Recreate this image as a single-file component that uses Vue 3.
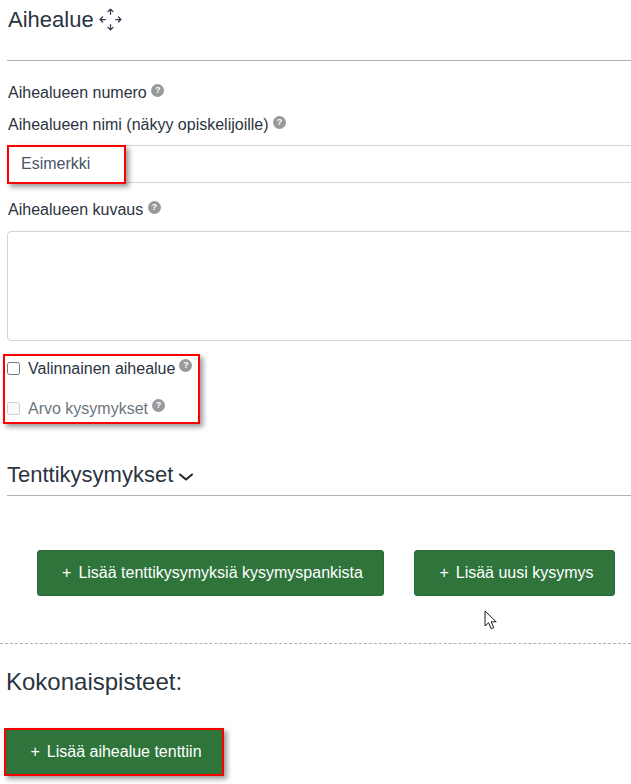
<script setup>
const help = '?'
</script>

<template>
  <div class="page">
    <header class="section-head first">
      <h2 class="title">Aihealue</h2>
      <svg class="move" viewBox="0 0 24 24" width="25" height="25" fill="none" stroke="#2f3b4c" stroke-width="1.2" stroke-linecap="round" stroke-linejoin="round">
        <path d="M12 2v5M9.6 4.4 12 2l2.4 2.4M12 17v5M9.6 19.6 12 22l2.4-2.4M2 12h5M4.4 9.6 2 12l2.4 2.4M17 12h5M19.6 9.6 22 12l-2.4 2.4" />
      </svg>
    </header>

    <div class="field-label first-label">Aihealueen numero <span class="help">{{ help }}</span></div>
    <div class="field-label second-label">Aihealueen nimi (näkyy opiskelijoille) <span class="help">{{ help }}</span></div>
    <div class="input">
      <span>Esimerkki</span>
      <div class="mark mark-input"></div>
    </div>

    <div class="field-label third-label">Aihealueen kuvaus <span class="help">{{ help }}</span></div>
    <div class="textarea"></div>

    <div class="checks">
      <div class="mark mark-checks"></div>
      <label class="check">
        <input type="checkbox" />
        <span>Valinnainen aihealue</span>
        <span class="help">{{ help }}</span>
      </label>
      <label class="check disabled">
        <input type="checkbox" disabled />
        <span>Arvo kysymykset</span>
        <span class="help">{{ help }}</span>
      </label>
    </div>

    <header class="section-head second">
      <h2 class="title">Tenttikysymykset</h2>
      <svg class="chevron" viewBox="0 0 16 10" width="16" height="10" fill="none" stroke="#212529" stroke-width="2" stroke-linecap="round" stroke-linejoin="round">
        <path d="M2 2.5l6 5 6-5" />
      </svg>
    </header>

    <div class="actions">
      <button class="btn wide" type="button"><span class="plus">+</span>Lisää tenttikysymyksiä kysymyspankista</button>
      <button class="btn narrow" type="button"><span class="plus">+</span>Lisää uusi kysymys</button>
      <svg class="cursor" viewBox="0 0 14 20" width="14" height="20">
        <path d="M1 1v15l3.6-3.3 2.6 6 2.6-1.1-2.6-5.8h5z" fill="#fff" stroke="#1a1a1a" stroke-width="1" stroke-linejoin="round" />
      </svg>
    </div>

    <div class="divider"></div>

    <h2 class="total">Kokonaispisteet:</h2>

    <button class="btn add" type="button"><span class="plus">+</span>Lisää aihealue tenttiin</button>
  </div>
</template>

<style scoped>
.page {
  position: relative;
  width: 631px;
  height: 784px;
  overflow: hidden;
  background: #fff;
  color: #2b3440;
  font-family: "Liberation Sans", Arial, sans-serif;
  font-size: 16px;
}
.section-head {
  display: flex;
  align-items: flex-start;
  margin-left: 7px;
  border-bottom: 1px solid #b0b0b0;
}
.section-head.first {
  box-sizing: border-box;
  height: 61px;
  padding-top: 7px;
}
.section-head.first .title {
  margin-left: 1px;
}
.section-head.second {
  margin-top: 33px;
  height: 39px;
  box-sizing: border-box;
  padding-top: 5px;
}
.title {
  margin: 0;
  font-size: 22px;
  font-weight: 400;
  line-height: 26px;
  color: #2b3440;
}
.move {
  margin-left: 4px;
  margin-top: 0;
}
.chevron {
  margin: 10px 0 0 5px;
}
.field-label {
  margin-left: 8px;
  line-height: 20px;
  color: #2b3440;
}
.first-label { margin-top: 22px; }
.second-label { margin-top: 12px; }
.third-label { margin-top: 17px; }
.help {
  display: inline-block;
  width: 13px;
  height: 13px;
  margin-left: 0;
  border-radius: 50%;
  background: #999;
  color: #fff;
  font-size: 9px;
  font-weight: 700;
  line-height: 13px;
  text-align: center;
  vertical-align: 5px;
}
.input {
  position: relative;
  box-sizing: border-box;
  height: 38px;
  margin-top: 10px;
  margin-left: 7px;
  padding: 0 14px;
  border-top: 1px solid #ced4da;
  border-bottom: 1px solid #ced4da;
  line-height: 36px;
  color: #495566;
}
.textarea {
  box-sizing: border-box;
  width: 640px;
  height: 110px;
  margin-top: 11px;
  margin-left: 7px;
  border: 1px solid #ced4da;
  border-radius: 4px;
}
.mark {
  position: absolute;
  box-sizing: border-box;
  border: 2px solid #f00;
  box-shadow: 3px 3px 5px rgba(0, 0, 0, 0.4);
  pointer-events: none;
}
.mark-input {
  left: 0;
  top: -1px;
  width: 119px;
  height: 39px;
}
.checks {
  position: relative;
  margin-top: 13px;
  height: 70px;
}
.mark-checks {
  left: 3px;
  top: 0;
  width: 197px;
  height: 70px;
}
.check {
  position: absolute;
  left: 7px;
  display: flex;
  align-items: center;
  line-height: 20px;
}
.check:first-of-type { top: 5px; }
.check.disabled { top: 45px; color: #6c757d; }
.check input {
  width: 13px;
  height: 13px;
  margin: -2px 8px 0 0;
}
.check .help { margin-left: 4px; margin-top: -8px; vertical-align: baseline; }
.actions {
  position: relative;
  display: flex;
  gap: 30px;
  margin-top: 54px;
  margin-left: 37px;
  height: 93px;
}
.btn {
  display: block;
  box-sizing: border-box;
  height: 46px;
  padding: 0 0 0 4px;
  border: 1px solid #2a6a37;
  border-radius: 3px;
  background: #2e743b;
  color: #fff;
  font-family: inherit;
  font-size: 16px;
  line-height: 20px;
  text-align: center;
}
.plus {
  margin-right: 7px;
}
.wide { width: 347px; }
.narrow { width: 201px; }
.cursor {
  position: absolute;
  left: 447px;
  top: 60px;
}
.divider {
  border-top: 1px dashed #9fb6bb;
}
.total {
  margin: 25px 0 0 6px;
  font-size: 24px;
  font-weight: 400;
  line-height: 26px;
  color: #2b3440;
}
.add {
  width: 220px;
  height: 48px;
  margin: 33px 0 0 4px;
  border: 2px solid #f00;
  border-radius: 0;
  box-shadow: 3px 3px 5px rgba(0, 0, 0, 0.4);
}
</style>
